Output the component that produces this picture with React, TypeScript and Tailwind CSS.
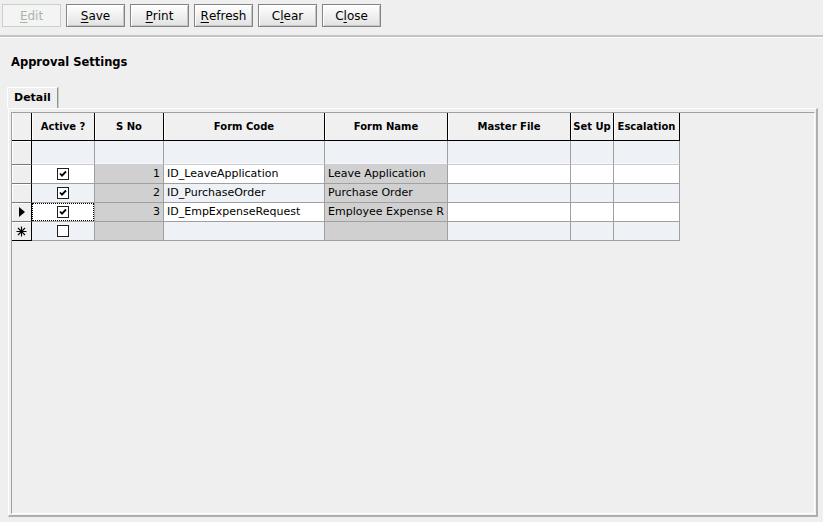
import React from 'react';

type Col = { key: string; title: string; w: string };

const cols: Col[] = [
  { key: 'active', title: 'Active ?', w: 'w-[63px]' },
  { key: 'sno', title: 'S No', w: 'w-[69px]' },
  { key: 'code', title: 'Form Code', w: 'w-[161px]' },
  { key: 'name', title: 'Form Name', w: 'w-[123px]' },
  { key: 'master', title: 'Master File', w: 'w-[123px]' },
  { key: 'setup', title: 'Set Up', w: 'w-[43px]' },
  { key: 'esc', title: 'Escalation', w: 'w-[66px]' },
];

const rows = [
  { sno: '1', code: 'ID_LeaveApplication', name: 'Leave Application', checked: true },
  { sno: '2', code: 'ID_PurchaseOrder', name: 'Purchase Order', checked: true },
  { sno: '3', code: 'ID_EmpExpenseRequest', name: 'Employee Expense R', checked: true },
];

const ToolButton = ({ label, hot, disabled }: { label: string; hot: number; disabled?: boolean }) => (
  <button
    className={
      'w-[59px] h-[23px] text-[12px] leading-none flex items-center justify-center ' +
      (disabled
        ? 'border border-[#c8d0c8] bg-[#f3f4f3] text-[#a9b4a9]'
        : 'border border-[#858585] bg-gradient-to-b from-white to-[#e2e2e2] text-black shadow-[inset_1px_1px_0_#ffffff,inset_-1px_-1px_0_#c4c4c4]')
    }
  >
    {label.slice(0, hot)}
    <span className="underline underline-offset-2">{label[hot]}</span>
    {label.slice(hot + 1)}
  </button>
);

const CheckBox = ({ checked }: { checked: boolean }) => (
  <div className="w-[12px] h-[12px] border border-[#1e1e1e] bg-white flex items-center justify-center">
    {checked && (
      <svg width="8" height="8" viewBox="0 0 8 8">
        <path d="M1 3.5 L3 5.6 L7 1.5" stroke="#000" strokeWidth="1.8" fill="none" />
      </svg>
    )}
  </div>
);

const RowHeader = ({ children }: { children?: React.ReactNode }) => (
  <div className="w-[20px] h-full bg-[#efefef] border-r border-b border-r-black border-b-[#7a7a7a] shadow-[inset_1px_1px_0_#ffffff] flex items-center justify-center">
    {children}
  </div>
);

export default function App() {
  return (
    <div className="w-[823px] h-[522px] bg-[#efefef] font-['DejaVu_Sans',Verdana,sans-serif] text-black flex flex-col overflow-hidden">
      {/* Toolbar */}
      <div className="flex gap-[5px] pl-[2px] pt-[4px] h-[37px] border-b-2 border-b-[#c2c6be]">
        <ToolButton label="Edit" hot={0} disabled />
        <ToolButton label="Save" hot={0} />
        <ToolButton label="Print" hot={0} />
        <ToolButton label="Refresh" hot={0} />
        <ToolButton label="Clear" hot={1} />
        <ToolButton label="Close" hot={1} />
      </div>
      <div className="h-px bg-white" />

      <div className="pl-[11px] pt-[16px] h-[49px] text-[11.5px] font-bold">Approval Settings</div>

      {/* Tabs */}
      <div className="pl-[7px] flex">
        <div className="h-[21px] px-[6px] border-t border-l border-r border-t-white border-l-white border-r-[#8f968f] shadow-[1px_0_0_#c6ccc6] text-[11px] font-bold flex items-center">
          Detail
        </div>
      </div>

      {/* Tab page */}
      <div className="ml-[8px] w-[810px] h-[409px] border-t border-l border-t-white border-l-white border-r-2 border-b-2 border-r-[#a9b1a9] border-b-[#a9b1a9] pl-[2px] pt-[3px] pr-[1px] pb-[1px]">
        <div className="w-full h-full border-t border-l border-[#a0a0a0] border-r border-b border-r-white border-b-white bg-[#efefef] text-[11px]">
          {/* Header */}
          <div className="flex h-[28px]">
            <div className="w-[20px] h-full bg-[#f0f0f0] border-r border-b border-black shadow-[inset_1px_0_0_#ffffff]" />
            {cols.map((c) => (
              <div
                key={c.key}
                className={`${c.w} h-full bg-[#f0f0f0] border-r border-b border-black shadow-[inset_1px_0_0_#ffffff] flex items-center justify-center text-[10px] font-bold whitespace-nowrap`}
              >
                {c.title}
              </div>
            ))}
          </div>

          {/* Filter row */}
          <div className="flex h-[24px]">
            <RowHeader />
            {cols.map((c) => (
              <div
                key={c.key}
                className={`${c.w} h-full bg-[#eef1f5] border-r border-r-[#a0a0a0] border-b border-b-[#c9ccd0] shadow-[inset_0_-1px_0_#f8f8f8]`}
              />
            ))}
          </div>

          {/* Data rows */}
          {rows.map((r, i) => {
            const bg = i % 2 === 0 ? 'bg-white' : 'bg-[#eef1f5]';
            const cell = 'h-full border-r border-b border-[#a0a0a0] flex items-center whitespace-nowrap overflow-hidden';
            return (
              <div key={r.sno} className="flex h-[19px]">
                <RowHeader>
                  {i === 2 && (
                    <svg width="6" height="10" viewBox="0 0 6 10">
                      <path d="M0 0 L6 5 L0 10 Z" fill="#000" />
                    </svg>
                  )}
                </RowHeader>
                <div className={`w-[63px] ${bg} ${cell} justify-center relative`}>
                  {i === 2 && <div className="absolute inset-0 border border-dotted border-black" />}
                  <CheckBox checked={r.checked} />
                </div>
                <div className={`w-[69px] bg-[#d0d0d0] ${cell} justify-end pr-[3px]`}>{r.sno}</div>
                <div className={`w-[161px] ${bg} ${cell} pl-[3px]`}>{r.code}</div>
                <div className={`w-[123px] bg-[#d0d0d0] ${cell} pl-[3px]`}>{r.name}</div>
                <div className={`w-[123px] ${bg} ${cell}`} />
                <div className={`w-[43px] ${bg} ${cell}`} />
                <div className={`w-[66px] ${bg} ${cell}`} />
              </div>
            );
          })}

          {/* New row */}
          <div className="flex h-[19px]">
            <div className="w-[20px] h-full bg-[#efefef] border-r border-b border-black shadow-[inset_1px_1px_0_#ffffff] flex items-center justify-center">
              <svg width="11" height="11" viewBox="0 0 11 11">
                <path d="M5.5 0.5 V10.5 M0.5 5.5 H10.5 M2 2 L9 9 M9 2 L2 9" stroke="#000" strokeWidth="1.1" />
              </svg>
            </div>
            <div className="w-[63px] h-full bg-[#eef1f5] border-r border-b border-[#a0a0a0] flex items-center justify-center">
              <CheckBox checked={false} />
            </div>
            <div className="w-[69px] h-full bg-[#d0d0d0] border-r border-b border-[#a0a0a0]" />
            <div className="w-[161px] h-full bg-[#eef1f5] border-r border-b border-[#a0a0a0]" />
            <div className="w-[123px] h-full bg-[#d0d0d0] border-r border-b border-[#a0a0a0]" />
            <div className="w-[123px] h-full bg-[#eef1f5] border-r border-b border-[#a0a0a0]" />
            <div className="w-[43px] h-full bg-[#eef1f5] border-r border-b border-[#a0a0a0]" />
            <div className="w-[66px] h-full bg-[#eef1f5] border-r border-b border-[#a0a0a0]" />
          </div>
        </div>
      </div>
    </div>
  );
}
